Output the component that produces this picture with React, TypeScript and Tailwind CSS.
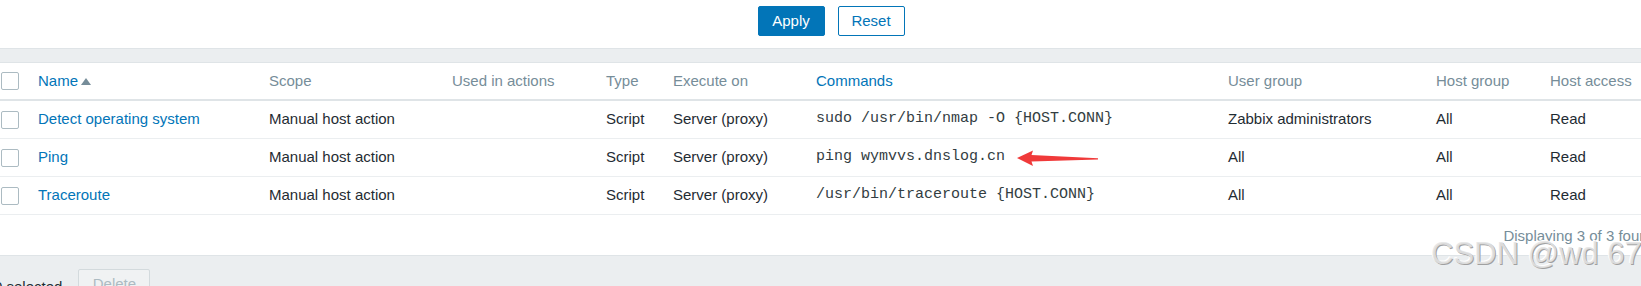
import React from 'react'

const cols = 'grid grid-cols-[52px_231px_183px_154px_67px_143px_412px_208px_114px_1fr]'

const scripts = [
  { name: 'Detect operating system', command: 'sudo /usr/bin/nmap -O {HOST.CONN}', userGroup: 'Zabbix administrators' },
  { name: 'Ping', command: 'ping wymvvs.dnslog.cn', userGroup: 'All', marked: true },
  { name: 'Traceroute', command: '/usr/bin/traceroute {HOST.CONN}', userGroup: 'All' },
]

function Checkbox() {
  return <span className="block w-[18px] h-[18px] rounded-[2px] border border-[#acbbc2] bg-white" />
}

function RedArrow() {
  return (
    <svg className="absolute left-[200px] top-[10px]" width="84" height="18" viewBox="0 0 84 18">
      <polygon points="1,9 17,1.5 15.5,6 82,9.2 82,10.6 15.5,12.5 17,17" fill="#f03a3a" />
    </svg>
  )
}

export default function App() {
  return (
    <div className="relative w-full h-[286px] overflow-hidden bg-white font-['Liberation_Sans',Arial,sans-serif] text-[15px] text-[#1f2c33]">
      <div className="w-[1690px] -ml-[14px]">
        {/* filter buttons */}
        <div className="h-[48px] flex justify-center items-start pt-[6px] gap-[13px]">
          <button className="w-[67px] h-[30px] rounded-[2px] bg-[#0275b8] border border-[#0275b8] text-white">Apply</button>
          <button className="w-[67px] h-[30px] rounded-[2px] bg-white border border-[#0275b8] text-[#0275b8]">Reset</button>
        </div>
        <div className="h-[15px] bg-[#ebeef0] border-y border-[#dfe4e7]" />

        {/* header */}
        <div className={`${cols} h-[38px] items-center border-b-2 border-[#dfe4e7] text-[#768d99]`}>
          <div className="pl-[15px]"><Checkbox /></div>
          <div className="flex items-center gap-[3px] text-[#0275b8]">
            Name
            <svg width="10" height="7" viewBox="0 0 10 7"><polygon points="5,0 10,7 0,7" fill="#768d99" /></svg>
          </div>
          <div>Scope</div>
          <div>Used in actions</div>
          <div>Type</div>
          <div>Execute on</div>
          <div className="text-[#0275b8]">Commands</div>
          <div>User group</div>
          <div>Host group</div>
          <div>Host access</div>
        </div>

        {/* rows */}
        {scripts.map((s) => (
          <div key={s.name} className={`${cols} h-[38px] items-center border-b border-[#ebeef0]`}>
            <div className="pl-[15px]"><Checkbox /></div>
            <div className="text-[#0275b8]">{s.name}</div>
            <div>Manual host action</div>
            <div />
            <div>Script</div>
            <div>Server (proxy)</div>
            <div className="relative h-full flex items-center font-['Liberation_Mono','Courier_New',monospace] text-[15px] text-[#333d42]">
              {s.command}
              {s.marked && <RedArrow />}
            </div>
            <div>{s.userGroup}</div>
            <div>All</div>
            <div>Read</div>
          </div>
        ))}

        {/* paging */}
        <div className="h-[40px] flex items-center justify-end pr-[20px] pt-[2px] text-[#768d99]">
          Displaying 3 of 3 found
        </div>

        {/* action bar */}
        <div className="h-[40px] bg-[#ebeef0] border-t border-[#dfe4e7] flex items-start pt-[13px] pl-[8px]">
          <span className="mt-[7px] text-[#1f2c33]">0 selected</span>
          <button disabled className="ml-[16px] w-[72px] h-[30px] rounded-[2px] border border-[#d3dadd] bg-[#f0f2f3] text-[#acbbc2]">Delete</button>
        </div>
      </div>

      {/* watermark */}
      <div className="absolute left-[1431px] top-[238px] h-[31px] flex items-center text-[31px] leading-[31px] whitespace-nowrap text-[#e4e4e4]/90 [text-shadow:1px_1px_0_#a0a0a0,-1px_-1px_0_#ffffff]">
        CSDN @wd 67
      </div>
    </div>
  )
}
